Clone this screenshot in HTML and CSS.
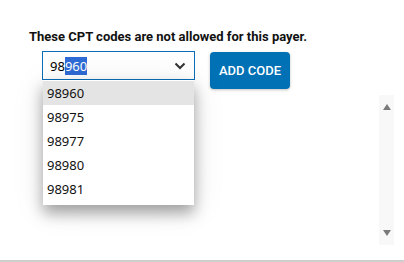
FILE: index.html
```html
<!DOCTYPE html>
<html lang="en">
<head>
    <meta charset="UTF-8">
    <meta name="viewport" content="width=device-width, initial-scale=1.0">
    <title>Payer CPT Codes</title>
    <link rel="stylesheet" href="styles.css">
</head>
<body>
    <div class="panel">
        <h4 class="titulo">These CPT codes are not allowed for this payer.</h4>
        <div class="linha">
            <div class="campo">
                <div class="combo">
                    <span class="valor">98<span class="selecao">960</span></span>
                    <svg class="seta" width="12" height="8" viewBox="0 0 12 8"><path d="M1.5 1.5 L6 6 L10.5 1.5" fill="none" stroke="#333" stroke-width="2"/></svg>
                </div>
                <ul class="opcoes">
                    <li class="ativa">98960</li>
                    <li>98975</li>
                    <li>98977</li>
                    <li>98980</li>
                    <li>98981</li>
                </ul>
            </div>
            <button class="botao">ADD CODE</button>
        </div>
        <div class="lista">
            <div class="rolagem">
                <span class="tri cima"></span>
                <span class="tri baixo"></span>
            </div>
        </div>
    </div>
</body>
</html>
```

FILE: styles.css
```css
body {
    font-family: Roboto, Arial, sans-serif;
    margin: 0;
    padding: 0;
    color: #000;
    background: #fff;
}
.panel {
    height: 262px;
    border-bottom: 2px solid #cdcdcd;
    padding: 29px 0 0 29px;
    box-sizing: border-box;
}
.titulo {
    margin: 0;
    font-size: 13px;
    font-weight: bold;
    line-height: 16px;
    color: #111;
}
.linha {
    display: flex;
    align-items: flex-start;
    margin-top: 6px;
    padding-left: 13px;
}
.campo {
    position: relative;
    z-index: 2;
}
.combo {
    width: 153px;
    height: 29px;
    box-sizing: border-box;
    border: 1px solid #0a6fb8;
    display: flex;
    align-items: center;
    justify-content: space-between;
    padding: 0 8px 0 7px;
    font-family: "Noto Sans", Arial, sans-serif;
    font-size: 13px;
    background: #fff;
}
.selecao {
    background: #2f6bd6;
    color: #fff;
}
.seta {
    margin-top: 1px;
}
.opcoes {
    position: absolute;
    left: 1px;
    top: 29px;
    width: 151px;
    margin: 0;
    padding: 0 0 4px;
    list-style-type: none;
    background: #fff;
    box-shadow: 0 8px 14px rgba(0, 0, 0, 0.35), 0 4px 34px rgba(0, 0, 0, 0.08);
    font-family: "Noto Sans", Arial, sans-serif;
    font-size: 13px;
}
.opcoes li {
    height: 24px;
    line-height: 24px;
    padding-left: 4px;
    color: #111;
}
.opcoes li.ativa {
    background: #e4e4e4;
    margin-top: 1px;
}
.botao {
    margin-left: 15px;
    margin-top: 1px;
    width: 80px;
    height: 37px;
    border: none;
    border-radius: 4px;
    background: #0071b5;
    color: #fff;
    font-family: Roboto, Arial, sans-serif;
    font-size: 13px;
    font-weight: 500;
    box-shadow: 0 1px 3px rgba(0, 0, 0, 0.25);
    cursor: pointer;
}
.lista {
    margin: 6px 0 0 15px;
    width: 350px;
    height: 150px;
    display: flex;
    justify-content: flex-end;
}
.rolagem {
    width: 15px;
    background: #f8f8f8;
    display: flex;
    flex-direction: column;
    justify-content: space-between;
    align-items: center;
    padding: 9px 0 9px;
    box-sizing: border-box;
}
.tri {
    width: 0;
    height: 0;
    border-left: 4px solid transparent;
    border-right: 4px solid transparent;
}
.tri.cima {
    border-bottom: 6px solid #7a7a7a;
}
.tri.baixo {
    border-top: 6px solid #7a7a7a;
}
```
